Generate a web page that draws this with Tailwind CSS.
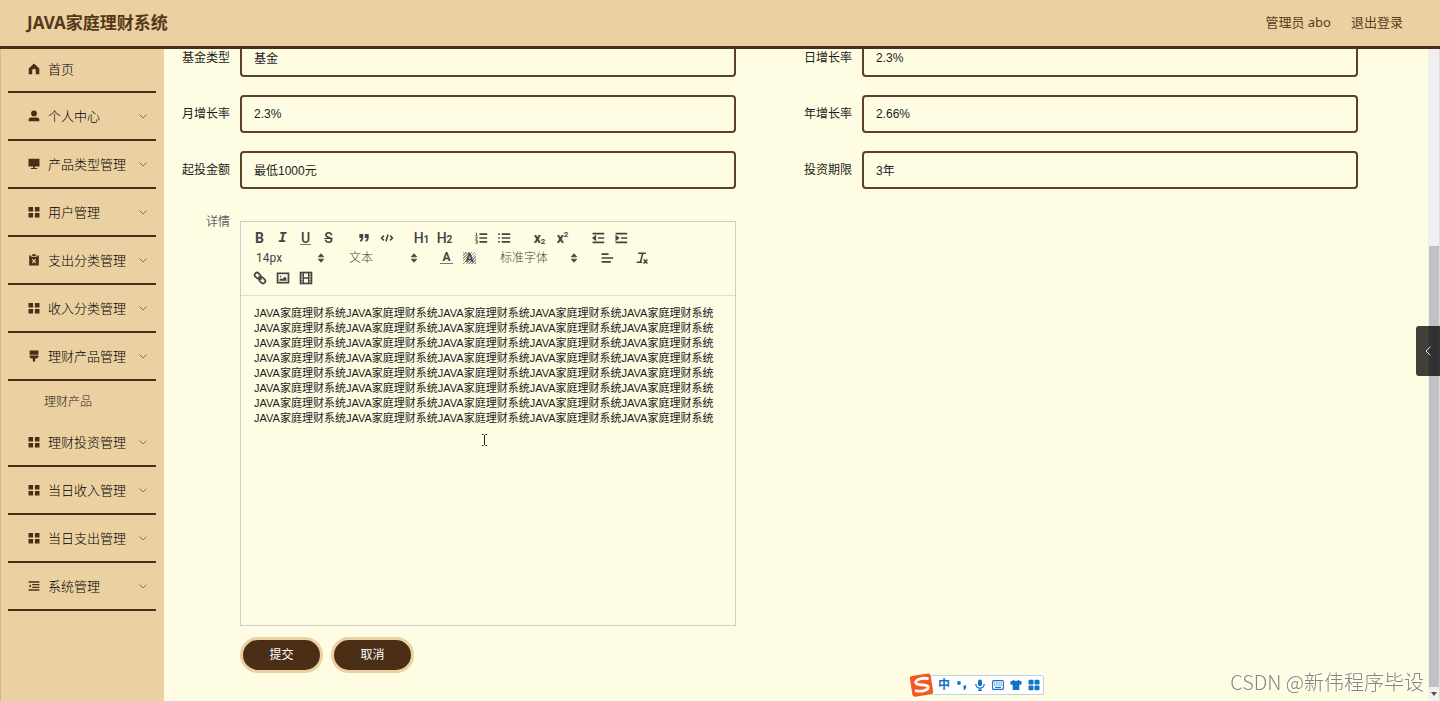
<!DOCTYPE html>
<html lang="zh-CN">

<head>
    <meta charset="UTF-8">
    <meta name="viewport" content="width=device-width, initial-scale=1.0">
    <title>JAVA家庭理财系统</title>
    <script src="https://cdn.jsdelivr.net/npm/@tailwindcss/browser@4"></script>
</head>

<body class="h-screen flex flex-col overflow-hidden bg-[#fefde3] text-[#1c1c1c] font-['Liberation_Sans','Noto_Sans_CJK_SC',sans-serif]">
    <!-- icons that are used more than once -->
    <svg class="hidden">
        <symbol id="down" viewBox="0 0 8 5"><path d="M.5 .5L4 4L7.5 .5" fill="none" stroke="#8d7350" /></symbol>
        <symbol id="menu" viewBox="0 0 12 12"><path d="M.5 1h4.6v4.4H.5zM6.9 1h4.6v4.4H6.9zM.5 7h4.6v4.4H.5zM6.9 7h4.6v4.4H6.9z" fill="#4a2e16" /></symbol>
        <symbol id="updown" viewBox="0 0 18 18"><path d="M5.5 7.5L9 3.5l3.5 4zM5.5 10.5L9 14.5l3.5-4z" fill="#444" stroke="#444" stroke-linejoin="round" /></symbol>
    </svg>

    <header class="h-[49px] shrink-0 flex items-center justify-between pl-[27px] pr-[37px] bg-[#ebd0a2] border-b-3 border-[#4a2e16] text-[#5a3c1c] font-['Noto_Sans','Noto_Sans_CJK_SC',sans-serif]">
        <h1 class="text-[17px] leading-6 font-bold text-[#54381a]">JAVA家庭理财系统</h1>
        <nav class="flex gap-5 pb-[2px] text-[13px] leading-5">
            <a href="#">管理员 abo</a>
            <a href="#">退出登录</a>
        </nav>
    </header>

    <div class="flex-1 min-h-0 flex">
        <aside class="w-[164px] shrink-0 pl-[7px] pr-2 bg-[#ebd0a2] border-l border-[#d3b88c] overflow-hidden">
            <ul class="text-[13px] text-black font-light font-['Noto_Sans_CJK_SC',sans-serif]">
                <li class="h-11 border-b-2 border-[#4a2e16]">
                    <a href="#" class="h-full flex items-center pb-[2px] pl-5 pr-[9px]">
                        <svg class="size-3 mr-2" viewBox="0 0 12 12"><path d="M6 .6L.7 5.600V11.200H4.200V7.600a1.800 1.800 0 0 1 3.600 0V11.200h3.500V5.600z" fill="#4a2e16" /></svg>
                        <span class="flex-1">首页</span>
                    </a>
                </li>
                <li class="h-12 border-b-2 border-[#4a2e16]">
                    <a href="#" class="h-full flex items-center pl-5 pr-[9px]">
                        <svg class="size-3 mr-2" viewBox="0 0 12 12"><circle cx="6" cy="3.4" r="2.9" fill="#4a2e16" /><path d="M.7 11.3V9.6Q.7 7.4 3 7.4H9q2.3 0 2.3 2.2v1.7z" fill="#4a2e16" /></svg>
                        <span class="flex-1">个人中心</span>
                        <svg class="w-2 h-[5px]"><use href="#down" /></svg>
                    </a>
                </li>
                <li class="h-12 border-b-2 border-[#4a2e16]">
                    <a href="#" class="h-full flex items-center pl-5 pr-[9px]">
                        <svg class="size-3 mr-2" viewBox="0 0 12 12"><path d="M.5 .8h11v7.7H.5zM5.2 8.5h1.6v1.6H5.2zM2.8 10.1h6.4v1H2.8z" fill="#4a2e16" /></svg>
                        <span class="flex-1">产品类型管理</span>
                        <svg class="w-2 h-[5px]"><use href="#down" /></svg>
                    </a>
                </li>
                <li class="h-12 border-b-2 border-[#4a2e16]">
                    <a href="#" class="h-full flex items-center pl-5 pr-[9px]">
                        <svg class="size-3 mr-2"><use href="#menu" /></svg>
                        <span class="flex-1">用户管理</span>
                        <svg class="w-2 h-[5px]"><use href="#down" /></svg>
                    </a>
                </li>
                <li class="h-12 border-b-2 border-[#4a2e16]">
                    <a href="#" class="h-full flex items-center pl-5 pr-[9px]">
                        <svg class="size-3 mr-2" viewBox="0 0 12 12"><path d="M1.2 1.4h2v1.4h5.6V1.4h2v10.2H1.2zM4.2 .2h3.6v1.7H4.2z" fill="#4a2e16" /><path d="M4.2 5.2l3.6 3.8M7.8 5.2L4.2 9" stroke="#ebd0a2" stroke-width="1.1" /></svg>
                        <span class="flex-1">支出分类管理</span>
                        <svg class="w-2 h-[5px]"><use href="#down" /></svg>
                    </a>
                </li>
                <li class="h-12 border-b-2 border-[#4a2e16]">
                    <a href="#" class="h-full flex items-center pl-5 pr-[9px]">
                        <svg class="size-3 mr-2"><use href="#menu" /></svg>
                        <span class="flex-1">收入分类管理</span>
                        <svg class="w-2 h-[5px]"><use href="#down" /></svg>
                    </a>
                </li>
                <li>
                    <a href="#" class="h-12 border-b-2 border-[#4a2e16] flex items-center pl-5 pr-[9px]">
                        <svg class="size-3 mr-2" viewBox="0 0 12 12"><path d="M1.6 .6h8.8v4.2H1.6zM1.6 5.5h8.8v1.7L8.6 8.4H7.2v2.2a1.2 1.2 0 0 1-2.4 0V8.4H3.4L1.6 7.2z" fill="#4a2e16" /></svg>
                        <span class="flex-1">理财产品管理</span>
                        <svg class="w-2 h-[5px]"><use href="#down" /></svg>
                    </a>
                    <a href="#" class="h-[38px] flex items-center pt-[2px] pl-9 text-[12px] text-[#222]">理财产品</a>
                </li>
                <li class="h-12 border-b-2 border-[#4a2e16]">
                    <a href="#" class="h-full flex items-center pl-5 pr-[9px]">
                        <svg class="size-3 mr-2"><use href="#menu" /></svg>
                        <span class="flex-1">理财投资管理</span>
                        <svg class="w-2 h-[5px]"><use href="#down" /></svg>
                    </a>
                </li>
                <li class="h-12 border-b-2 border-[#4a2e16]">
                    <a href="#" class="h-full flex items-center pl-5 pr-[9px]">
                        <svg class="size-3 mr-2"><use href="#menu" /></svg>
                        <span class="flex-1">当日收入管理</span>
                        <svg class="w-2 h-[5px]"><use href="#down" /></svg>
                    </a>
                </li>
                <li class="h-12 border-b-2 border-[#4a2e16]">
                    <a href="#" class="h-full flex items-center pl-5 pr-[9px]">
                        <svg class="size-3 mr-2"><use href="#menu" /></svg>
                        <span class="flex-1">当日支出管理</span>
                        <svg class="w-2 h-[5px]"><use href="#down" /></svg>
                    </a>
                </li>
                <li class="h-12 border-b-2 border-[#4a2e16]">
                    <a href="#" class="h-full flex items-center pl-5 pr-[9px]">
                        <svg class="size-3 mr-2" viewBox="0 0 12 12"><path d="M.6 2h10.800M4.200 4.700h7.200M4.200 7.300h7.200M.6 10h10.800" stroke="#4a2e16" stroke-width="1.300" /><path d="M.6 6L3 4.400v3.200z" fill="#4a2e16" /></svg>
                        <span class="flex-1">系统管理</span>
                        <svg class="w-2 h-[5px]"><use href="#down" /></svg>
                    </a>
                </li>
            </ul>
        </aside>

        <main class="flex-1 min-w-0 overflow-hidden pl-4 pr-1">
            <form class="-mt-[10px] text-[12px]">
                <div class="grid grid-cols-2 gap-y-[18px]">
                    <div class="flex items-center pr-[66px]">
                        <label for="type" class="w-[50px] mr-[10px] text-right">基金类型</label>
                        <input id="type" value="基金" class="flex-1 min-w-0 h-[38px] px-3 pb-[2px] border-2 border-[#5c4128] rounded">
                    </div>
                    <div class="flex items-center pr-[66px]">
                        <label for="day" class="w-[50px] mr-[10px] text-right">日增长率</label>
                        <input id="day" value="2.3%" class="flex-1 min-w-0 h-[38px] px-3 border-2 border-[#5c4128] rounded">
                    </div>
                    <div class="flex items-center pr-[66px]">
                        <label for="month" class="w-[50px] mr-[10px] text-right">月增长率</label>
                        <input id="month" value="2.3%" class="flex-1 min-w-0 h-[38px] px-3 border-2 border-[#5c4128] rounded">
                    </div>
                    <div class="flex items-center pr-[66px]">
                        <label for="year" class="w-[50px] mr-[10px] text-right">年增长率</label>
                        <input id="year" value="2.66%" class="flex-1 min-w-0 h-[38px] px-3 border-2 border-[#5c4128] rounded">
                    </div>
                    <div class="flex items-center pr-[66px]">
                        <label for="amount" class="w-[50px] mr-[10px] text-right">起投金额</label>
                        <input id="amount" value="最低1000元" class="flex-1 min-w-0 h-[38px] px-3 pb-[2px] border-2 border-[#5c4128] rounded">
                    </div>
                    <div class="flex items-center pr-[66px]">
                        <label for="term" class="w-[50px] mr-[10px] text-right">投资期限</label>
                        <input id="term" value="3年" class="flex-1 min-w-0 h-[38px] px-3 pb-[2px] border-2 border-[#5c4128] rounded">
                    </div>
                </div>

                <div class="w-1/2 mt-6 flex items-start pr-[66px]">
                    <span id="detailLabel" class="w-[50px] mr-[10px] text-right leading-[18px] text-[#606266]">详情</span>
                    <div class="flex-1 min-w-0 mt-2 border border-[#ccc]">
                        <div class="pt-[6px] pb-[7px] pl-[7px] border-b border-[#ddd] text-[#444]">
                            <div class="h-5 flex gap-3 font-['Roboto',sans-serif] text-[14px] leading-4 font-medium">
                                <div class="flex">
                                    <button type="button" class="w-[23px] flex items-center justify-center font-bold">B</button>
                                    <button type="button" class="w-[23px] flex items-center justify-center italic font-['Liberation_Mono',monospace] font-bold">I</button>
                                    <button type="button" class="w-[23px] flex items-center justify-center"><span class="border-b border-[#777] px-px leading-3">U</span></button>
                                    <button type="button" class="w-[23px] flex items-center justify-center"><s class="px-px">S</s></button>
                                </div>
                                <div class="flex">
                                    <button type="button" aria-label="引用" class="w-[23px] flex items-center justify-center">
                                        <svg class="size-[14px]" viewBox="0 0 18 18" fill="#444" stroke="#444" stroke-width="2"><path d="M4 5h3v3H4zM11 5h3v3h-3z" /><path d="M7 8c0 4-3 5-3 5M14 8c0 4-3 5-3 5" fill="none" /></svg>
                                    </button>
                                    <button type="button" aria-label="代码" class="w-[23px] flex items-center justify-center">
                                        <svg class="size-[14px]" viewBox="0 0 18 18" fill="none" stroke="#444" stroke-width="2"><path d="M5 6L2 9l3 3M13 6l3 3-3 3M10.3 4.5L7.7 13.5" /></svg>
                                    </button>
                                </div>
                                <div class="flex">
                                    <button type="button" class="w-[23px] flex items-center justify-center">H<span class="text-[10px] font-bold pt-[3px]">1</span></button>
                                    <button type="button" class="w-[23px] flex items-center justify-center">H<span class="text-[10px] font-bold pt-[3px]">2</span></button>
                                </div>
                                <div class="flex pl-px">
                                    <button type="button" aria-label="有序列表" class="w-[23px] flex items-center justify-center">
                                        <svg class="size-[14px]" viewBox="0 0 18 18" fill="none" stroke="#444"><path d="M7 4h10M7 9h10M7 14h10" stroke-width="2.2" /><path d="M2 2.5h1.200V6M1.700 6h3M1.800 7.800h2.400v1L2 10.600h2.600M1.800 12.400h2.500v3.400H1.800M2.400 14h1.800" /></svg>
                                    </button>
                                    <button type="button" aria-label="无序列表" class="w-[23px] flex items-center justify-center">
                                        <svg class="size-[14px]" viewBox="0 0 18 18" fill="none" stroke="#444" stroke-width="2.2"><path d="M6 4h11M6 9h11M6 14h11M1.500 4h2M1.500 9h2M1.500 14h2" /></svg>
                                    </button>
                                </div>
                                <div class="flex pl-px font-bold">
                                    <button type="button" class="w-[23px] flex items-center justify-center">x<span class="text-[8px] pt-[7px]">2</span></button>
                                    <button type="button" class="w-[23px] flex items-center justify-center">x<span class="text-[8px] pb-[7px]">2</span></button>
                                </div>
                                <div class="flex">
                                    <button type="button" aria-label="减少缩进" class="w-[23px] flex items-center justify-center">
                                        <svg class="size-[14px]" viewBox="0 0 18 18" fill="none" stroke="#444" stroke-width="2.2"><path d="M2 3.500h15M9 9h8M2 14.500h15" /><path d="M5.500 7v4L3 9z" fill="#444" /></svg>
                                    </button>
                                    <button type="button" aria-label="增加缩进" class="w-[23px] flex items-center justify-center">
                                        <svg class="size-[14px]" viewBox="0 0 18 18" fill="none" stroke="#444" stroke-width="2.2"><path d="M2 3.500h15M9 9h8M2 14.500h15" /><path d="M3 7v4L5.500 9z" fill="#444" /></svg>
                                    </button>
                                </div>
                            </div>
                            <div class="h-5 flex gap-3">
                                <div class="relative w-[82px]">
                                    <select aria-label="字号" class="appearance-none w-full h-5 pl-2 font-['Roboto',sans-serif]"><option>14px</option></select>
                                    <svg class="absolute right-[2px] top-[3px] size-[14px] pointer-events-none"><use href="#updown" /></svg>
                                </div>
                                <div class="relative w-[81px]">
                                    <select aria-label="标题" class="appearance-none w-full h-5 pl-[7px] font-light"><option>文本</option></select>
                                    <svg class="absolute right-[2px] top-[3px] size-[14px] pointer-events-none"><use href="#updown" /></svg>
                                </div>
                                <div class="flex font-['Roboto',sans-serif] font-bold text-[12px]">
                                    <button type="button" class="w-[23px] flex items-center justify-center"><span class="border-b border-[#777] px-[2px] leading-[11px]">A</span></button>
                                    <button type="button" class="w-[23px] flex items-center justify-center"><span class="px-[2px] leading-3 bg-[repeating-linear-gradient(135deg,#999_0px,#999_1px,#fefde3_1px,#fefde3_2px)]">A</span></button>
                                </div>
                                <div class="relative w-[90px]">
                                    <select aria-label="字体" class="appearance-none w-full h-5 pl-[7px] font-light"><option>标准字体</option></select>
                                    <svg class="absolute right-[2px] top-[3px] size-[14px] pointer-events-none"><use href="#updown" /></svg>
                                </div>
                                <button type="button" aria-label="对齐" class="w-[23px] flex items-center justify-center">
                                    <svg class="size-[14px]" viewBox="0 0 18 18" stroke="#444" stroke-width="2.2"><path d="M2 4h9M2 9h15M2 14h12" /></svg>
                                </button>
                                <button type="button" aria-label="清除格式" class="w-[23px] flex items-center justify-center">
                                    <svg class="size-[14px]" viewBox="0 0 18 18" fill="none" stroke="#444" stroke-width="2"><path d="M4 3h10M10 3L7 14M2 14.500h7M11 11l5 5M16 11l-5 5" /></svg>
                                </button>
                            </div>
                            <div class="h-5 flex">
                                <button type="button" aria-label="链接" class="w-[23px] flex items-center justify-center">
                                    <svg class="size-[14px]" viewBox="0 0 18 18" fill="none" stroke="#444" stroke-width="2.2"><path d="M7 7l4 4" /><rect x="-4.200" y="-3" width="8.400" height="6" rx="3" transform="translate(6 6) rotate(45)" /><rect x="-4.200" y="-3" width="8.400" height="6" rx="3" transform="translate(12 12) rotate(45)" /></svg>
                                </button>
                                <button type="button" aria-label="图片" class="w-[23px] flex items-center justify-center">
                                    <svg class="size-[14px]" viewBox="0 0 18 18" fill="none" stroke="#444" stroke-width="2.2"><rect x="2" y="3" width="14" height="12" /><circle cx="6" cy="7" r="1" fill="#444" stroke="none" /><path d="M4.500 12.500V11l2-2 1.500 1.500L11.500 7l2 2.500v3z" fill="#444" stroke="none" /></svg>
                                </button>
                                <button type="button" aria-label="视频" class="w-[23px] flex items-center justify-center">
                                    <svg class="size-[14px]" viewBox="0 0 18 18" fill="none" stroke="#444" stroke-width="2.2"><rect x="2" y="2" width="14" height="14" /><path d="M5.500 2v14M12.500 2v14M5.500 9h7" stroke-width="1.800" /><path d="M2 5.500h3M2 9h3M2 12.500h3M13 5.500h3M13 9h3M13 12.500h3" stroke-width="1" /></svg>
                                </button>
                            </div>
                        </div>
                        <div contenteditable="true" role="textbox" aria-labelledby="detailLabel" class="relative h-[329px] px-[13px] pt-[10px] text-[11px] leading-[15px] outline-none">
                            <p>JAVA家庭理财系统JAVA家庭理财系统JAVA家庭理财系统JAVA家庭理财系统JAVA家庭理财系统</p>
                            <p>JAVA家庭理财系统JAVA家庭理财系统JAVA家庭理财系统JAVA家庭理财系统JAVA家庭理财系统</p>
                            <p>JAVA家庭理财系统JAVA家庭理财系统JAVA家庭理财系统JAVA家庭理财系统JAVA家庭理财系统</p>
                            <p>JAVA家庭理财系统JAVA家庭理财系统JAVA家庭理财系统JAVA家庭理财系统JAVA家庭理财系统</p>
                            <p>JAVA家庭理财系统JAVA家庭理财系统JAVA家庭理财系统JAVA家庭理财系统JAVA家庭理财系统</p>
                            <p>JAVA家庭理财系统JAVA家庭理财系统JAVA家庭理财系统JAVA家庭理财系统JAVA家庭理财系统</p>
                            <p>JAVA家庭理财系统JAVA家庭理财系统JAVA家庭理财系统JAVA家庭理财系统JAVA家庭理财系统</p>
                            <p>JAVA家庭理财系统JAVA家庭理财系统JAVA家庭理财系统JAVA家庭理财系统JAVA家庭理财系统</p>
                            <svg class="absolute left-[240px] top-[138px] w-[7px] h-3" viewBox="0 0 7 12" fill="none" stroke="#222"><path d="M1 .5h1.500l1 1 1-1H6M3.500 1.500v9M1 11.500h1.500l1-1 1 1H6" /></svg>
                        </div>
                    </div>
                </div>

                <div class="mt-[11px] pl-[60px] flex gap-2 text-white">
                    <button type="submit" class="w-[83px] h-9 rounded-full border-3 border-[#ebd0a2] bg-[#4a2e16]">提交</button>
                    <button type="button" class="w-[83px] h-9 rounded-full border-3 border-[#ebd0a2] bg-[#4a2e16]">取消</button>
                </div>
            </form>
        </main>

        <!-- scrollbar -->
        <div class="w-3 shrink-0 flex flex-col bg-[#f0f0f0] border-r border-[#ddd]">
            <div class="flex-[197]"></div>
            <div class="flex-[441] ml-px bg-[#c1c1c1]"></div>
            <div class="h-[14px] flex items-center justify-center">
                <svg class="w-[6px] h-1" viewBox="0 0 6 4"><path d="M0 0h6L3 4z" fill="#505050" /></svg>
            </div>
        </div>
    </div>

    <!-- side drawer handle -->
    <button type="button" aria-label="展开" class="fixed right-0 top-[326px] w-6 h-[50px] flex items-center justify-center rounded-l-[3px] bg-black/75">
        <svg class="w-[6px] h-[10px]" viewBox="0 0 6 10" fill="none" stroke="#ddd"><path d="M5.500 .5L1 5l4.500 4.500" /></svg>
    </button>

    <!-- input method bar -->
    <div class="fixed left-[910px] bottom-[4px] flex items-center">
        <svg class="size-6 z-10" viewBox="0 0 24 24"><g transform="rotate(-9 12 12)"><rect x="1" y="1.500" width="21" height="21" rx="2.500" fill="#f4581f" /><path d="M18.500 6.500C14 4.800 6.200 5.300 6.200 8.800c0 3.800 11.600 2.200 11.600 6.200 0 3.500-8.300 3.600-12.500 1.800" fill="none" stroke="#fff" stroke-width="2.800" stroke-linecap="round" /></g></svg>
        <div class="-ml-1 h-5 w-[114px] pl-[7px] flex items-center gap-[6px] bg-white border border-[#b9d3ec] rounded-xs text-[#1272cc]">
            <span class="w-3 text-[12px] leading-4 font-bold">中</span>
            <svg class="size-3" viewBox="0 0 12 12" fill="currentColor"><circle cx="3" cy="4" r="1.900" /><path d="M7.500 6.500h2.700v2.200L8.400 11H7.200l.9-2H7.500z" /></svg>
            <svg class="size-3" viewBox="0 0 12 12" fill="none" stroke="currentColor" stroke-width="1.300"><rect x="4" y=".5" width="4" height="6.800" rx="2" fill="currentColor" stroke="none" /><path d="M1.800 5a4.200 4.200 0 0 0 8.400 0M6 9v3M4 11.500h4" /></svg>
            <svg class="size-3" viewBox="0 0 12 12" fill="none" stroke="currentColor" stroke-width="1.100"><rect x=".6" y="1.600" width="10.800" height="8.800" rx="1" /><path d="M2 4h8M2 6h8" stroke-dasharray="1.300 .9" /><path d="M3 8.400h6" /></svg>
            <svg class="size-3" viewBox="0 0 12 12" fill="currentColor"><path d="M3.600 1Q6 3.200 8.400 1L12 3l-1.200 3-1.500-.5V11H2.700V5.500L1.200 6 0 3z" /></svg>
            <svg class="size-3" viewBox="0 0 12 12" fill="currentColor"><rect x=".5" y=".8" width="5" height="4.800" rx="1.200" /><rect x="6.500" y=".8" width="5" height="4.800" rx="1.200" /><rect x=".5" y="6.400" width="5" height="4.800" rx="1.200" /><rect x="6.500" y="6.400" width="5" height="4.800" rx="1.200" /></svg>
        </div>
    </div>

    <p class="fixed right-4 bottom-[4px] text-[20px] leading-[30px] font-light text-[#85857c] [text-shadow:-1px_-1px_0_#fff] font-['Noto_Sans_CJK_SC',sans-serif]">CSDN @新伟程序毕设</p>
</body>

</html>
